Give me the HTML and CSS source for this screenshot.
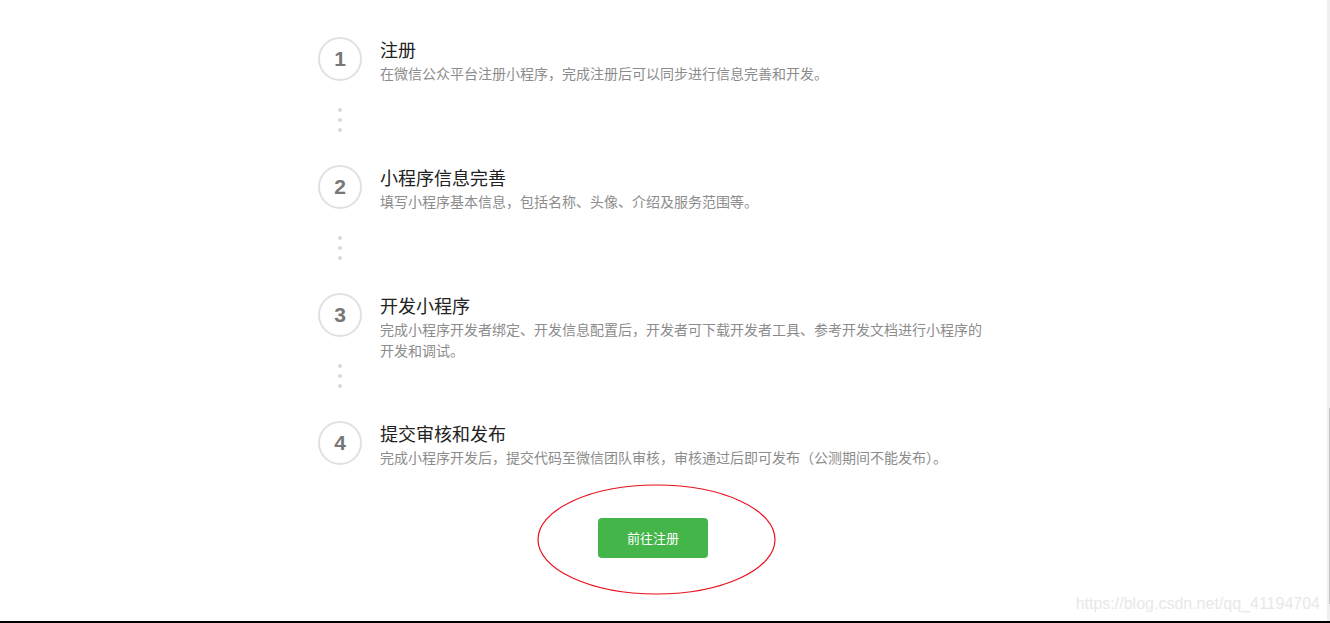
FILE: index.html
```html
<!DOCTYPE html>
<html lang="zh-CN">
<head>
    <meta charset="UTF-8">
    <meta name="viewport" content="width=device-width, initial-scale=1.0">
    <title>小程序接入流程</title>
    <link rel="stylesheet" href="styles.css">
</head>
<body>
    <div class="page">
        <div class="steps">
            <div class="step">
                <div class="step-side">
                    <div class="step-num">1</div>
                    <div class="dots"><span></span><span></span><span></span></div>
                </div>
                <div class="step-info">
                    <h3>注册</h3>
                    <p>在微信公众平台注册小程序，完成注册后可以同步进行信息完善和开发。</p>
                </div>
            </div>
            <div class="step">
                <div class="step-side">
                    <div class="step-num">2</div>
                    <div class="dots"><span></span><span></span><span></span></div>
                </div>
                <div class="step-info">
                    <h3>小程序信息完善</h3>
                    <p>填写小程序基本信息，包括名称、头像、介绍及服务范围等。</p>
                </div>
            </div>
            <div class="step">
                <div class="step-side">
                    <div class="step-num">3</div>
                    <div class="dots"><span></span><span></span><span></span></div>
                </div>
                <div class="step-info">
                    <h3>开发小程序</h3>
                    <p>完成小程序开发者绑定、开发信息配置后，开发者可下载开发者工具、参考开发文档进行小程序的开发和调试。</p>
                </div>
            </div>
            <div class="step">
                <div class="step-side">
                    <div class="step-num">4</div>
                </div>
                <div class="step-info">
                    <h3>提交审核和发布</h3>
                    <p>完成小程序开发后，提交代码至微信团队审核，审核通过后即可发布（公测期间不能发布）。</p>
                </div>
            </div>

            <div class="actions">
                <div class="btn-wrap">
                    <a class="btn-primary" href="#">前往注册</a>
                    <!-- 红圈标注 -->
                    <svg class="mark" width="239" height="111" viewBox="0 0 239 111">
                        <ellipse cx="119.5" cy="55.5" rx="118.5" ry="54.5" fill="none" stroke="#e8101c" stroke-width="1.2"/>
                    </svg>
                </div>
            </div>
        </div>

        <div class="scrollbar"><div class="thumb"></div></div>
        <div class="watermark">https://blog.csdn.net/qq_41194704</div>
    </div>
</body>
</html>
```

FILE: styles.css
```css
* {
    box-sizing: border-box;
}

body {
    margin: 0;
    font-family: "Microsoft YaHei", "Noto Sans CJK SC", "Liberation Sans", sans-serif;
    background-color: #fff;
    color: #333;
}

.page {
    position: relative;
    height: 623px;
    overflow: hidden;
    border-bottom: 2px solid #000;
}

.steps {
    width: 670px;
    margin-left: 318px;
    padding-top: 37px;
}

.step {
    display: flex;
    gap: 18px;
}

.step-side {
    width: 44px;
    flex-shrink: 0;
    display: flex;
    flex-direction: column;
    align-items: center;
}

.step-num {
    width: 44px;
    height: 44px;
    border: 2px solid #e1e1e1;
    border-radius: 50%;
    display: flex;
    align-items: center;
    justify-content: center;
    font-family: "Liberation Sans", Arial, sans-serif;
    font-size: 21px;
    font-weight: bold;
    color: #777;
}

/* puntos entre pasos */
.dots {
    display: flex;
    flex-direction: column;
    gap: 6px;
    margin-top: 27px;
    margin-bottom: 33px;
}

.dots span {
    width: 4px;
    height: 4px;
    border-radius: 50%;
    background-color: #dadada;
}

.step-info h3 {
    margin: 0;
    font-size: 18px;
    line-height: 24px;
    font-weight: normal;
    color: #222;
}

.step-info p {
    margin: 2px 0 0;
    width: 610px;
    font-size: 14px;
    line-height: 21px;
    color: #8c8c8c;
}

.actions {
    display: flex;
    justify-content: center;
    margin-top: 50px;
}

.btn-wrap {
    position: relative;
}

.btn-primary {
    display: block;
    width: 110px;
    height: 40px;
    line-height: 40px;
    text-align: center;
    background-color: #44b549;
    border-radius: 4px;
    color: #fff;
    font-size: 13px;
    text-decoration: none;
}

.mark {
    position: absolute;
    left: -61px;
    top: -34px;
}

.scrollbar {
    position: absolute;
    right: 0;
    top: 0;
    width: 3px;
    height: 621px;
    background-color: #f0f0f0;
}

.thumb {
    position: absolute;
    right: 0;
    top: 408px;
    width: 1px;
    height: 196px;
    background-color: #c4c4c4;
}

.watermark {
    position: absolute;
    right: 10px;
    bottom: 8px;
    font-family: "Liberation Sans", Arial, sans-serif;
    font-size: 16px;
    color: #e8e8e8;
}
```
